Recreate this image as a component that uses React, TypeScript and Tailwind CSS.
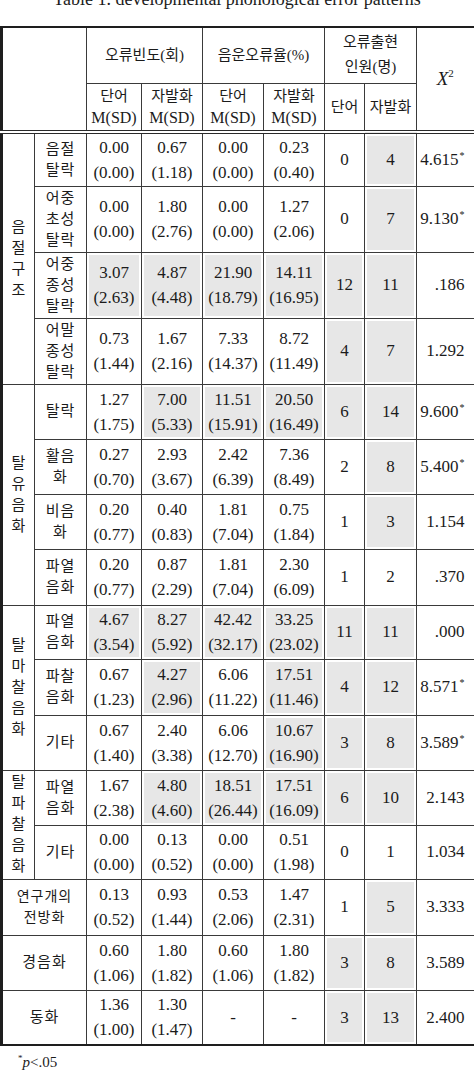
const font = "font-['Liberation_Serif','Noto_Sans_CJK_KR',serif]";

type Num = [string, string, boolean];
type Row = {
  label: string[];
  h: string;
  nums: Num[];
  w: [string, boolean];
  s: [string, boolean];
  x: string;
  star?: boolean;
};

const group1: Row[] = [
  { label: ['음절', '탈락'], h: 'h-[54px]', nums: [['0.00', '(0.00)', false], ['0.67', '(1.18)', false], ['0.00', '(0.00)', false], ['0.23', '(0.40)', false]], w: ['0', false], s: ['4', true], x: '4.615', star: true },
  { label: ['어중', '초성', '탈락'], h: 'h-[66px]', nums: [['0.00', '(0.00)', false], ['1.80', '(2.76)', false], ['0.00', '(0.00)', false], ['1.27', '(2.06)', false]], w: ['0', false], s: ['7', true], x: '9.130', star: true },
  { label: ['어중', '종성', '탈락'], h: 'h-[66px]', nums: [['3.07', '(2.63)', true], ['4.87', '(4.48)', true], ['21.90', '(18.79)', true], ['14.11', '(16.95)', true]], w: ['12', true], s: ['11', true], x: '.186' },
  { label: ['어말', '종성', '탈락'], h: 'h-[66px]', nums: [['0.73', '(1.44)', false], ['1.67', '(2.16)', false], ['7.33', '(14.37)', false], ['8.72', '(11.49)', false]], w: ['4', true], s: ['7', true], x: '1.292' },
];

const group2: Row[] = [
  { label: ['탈락'], h: 'h-[55px]', nums: [['1.27', '(1.75)', false], ['7.00', '(5.33)', true], ['11.51', '(15.91)', true], ['20.50', '(16.49)', true]], w: ['6', true], s: ['14', true], x: '9.600', star: true },
  { label: ['활음', '화'], h: 'h-[55px]', nums: [['0.27', '(0.70)', false], ['2.93', '(3.67)', false], ['2.42', '(6.39)', false], ['7.36', '(8.49)', false]], w: ['2', false], s: ['8', true], x: '5.400', star: true },
  { label: ['비음', '화'], h: 'h-[55px]', nums: [['0.20', '(0.77)', false], ['0.40', '(0.83)', false], ['1.81', '(7.04)', false], ['0.75', '(1.84)', false]], w: ['1', false], s: ['3', true], x: '1.154' },
  { label: ['파열', '음화'], h: 'h-[56px]', nums: [['0.20', '(0.77)', false], ['0.87', '(2.29)', false], ['1.81', '(7.04)', false], ['2.30', '(6.09)', false]], w: ['1', false], s: ['2', false], x: '.370' },
];

const group3: Row[] = [
  { label: ['파열', '음화'], h: 'h-[54px]', nums: [['4.67', '(3.54)', true], ['8.27', '(5.92)', true], ['42.42', '(32.17)', true], ['33.25', '(23.02)', true]], w: ['11', true], s: ['11', true], x: '.000' },
  { label: ['파찰', '음화'], h: 'h-[56px]', nums: [['0.67', '(1.23)', false], ['4.27', '(2.96)', true], ['6.06', '(11.22)', false], ['17.51', '(11.46)', true]], w: ['4', true], s: ['12', true], x: '8.571', star: true },
  { label: ['기타'], h: 'h-[55px]', nums: [['0.67', '(1.40)', false], ['2.40', '(3.38)', false], ['6.06', '(12.70)', false], ['10.67', '(16.90)', true]], w: ['3', true], s: ['8', true], x: '3.589', star: true },
];

const group4: Row[] = [
  { label: ['파열', '음화'], h: 'h-[55px]', nums: [['1.67', '(2.38)', false], ['4.80', '(4.60)', true], ['18.51', '(26.44)', true], ['17.51', '(16.09)', true]], w: ['6', true], s: ['10', true], x: '2.143' },
  { label: ['기타'], h: 'h-[54px]', nums: [['0.00', '(0.00)', false], ['0.13', '(0.52)', false], ['0.00', '(0.00)', false], ['0.51', '(1.98)', false]], w: ['0', false], s: ['1', false], x: '1.034' },
];

const tail: Row[] = [
  { label: ['연구개의', '전방화'], h: 'h-[56px]', nums: [['0.13', '(0.52)', false], ['0.93', '(1.44)', false], ['0.53', '(2.06)', false], ['1.47', '(2.31)', false]], w: ['1', false], s: ['5', true], x: '3.333' },
  { label: ['경음화'], h: 'h-[55px]', nums: [['0.60', '(1.06)', false], ['1.80', '(1.82)', false], ['0.60', '(1.06)', false], ['1.80', '(1.82)', false]], w: ['3', true], s: ['8', true], x: '3.589' },
  { label: ['동화'], h: 'h-[55px]', nums: [['1.36', '(1.00)', false], ['1.30', '(1.47)', false], ['-', '', false], ['-', '', false]], w: ['3', true], s: ['13', true], x: '2.400' },
];

const cell = 'border border-[#3a3a3a] p-0 text-center align-middle';
const shade = 'bg-[#e7e7e7] shadow-[inset_0_0_0_2px_#fff]';
const dbl = 'border-b-4 border-b-[#2a2a2a] border-double';

const Label = ({ lines, small }: { lines: string[]; small?: boolean }) => (
  <div className={`flex flex-col items-center ${small ? 'text-[14px]' : 'text-[15px]'} tracking-[1px] leading-[21px]`}>
    {lines.map((l) => (
      <span key={l}>{l}</span>
    ))}
  </div>
);

const Cells = ({ row }: { row: Row }) => (
  <>
    {row.nums.map(([m, sd, g], i) => (
      <td key={i} className={`${cell} ${g ? shade : ''} text-[17px] leading-[25px]`}>
        <div>{m}</div>
        {sd && <div>{sd}</div>}
      </td>
    ))}
    <td className={`${cell} ${row.w[1] ? shade : ''} text-[17px]`}>{row.w[0]}</td>
    <td className={`${cell} ${row.s[1] ? shade : ''} text-[17px]`}>{row.s[0]}</td>
    <td className={`${cell} text-[17px] !text-right pr-[9px]`}>
      {row.x}
      {row.star && <sup className="text-[10px] -top-[6px] ml-[1px]">*</sup>}
    </td>
  </>
);

const Group = ({ name, rows }: { name: string; rows: Row[] }) => (
  <>
    {rows.map((row, i) => (
      <tr key={i} className={row.h}>
        {i === 0 && (
          <td rowSpan={rows.length} className={cell}>
            <div className="flex flex-col items-center text-[15px] leading-[21px]">
              {name.split('').map((c, j) => (
                <span key={j}>{c}</span>
              ))}
            </div>
          </td>
        )}
        <td className={cell}>
          <Label lines={row.label} />
        </td>
        <Cells row={row} />
      </tr>
    ))}
  </>
);

export default function App() {
  return (
    <div className={`w-[474px] bg-white text-[#1b1b1b] ${font} overflow-hidden`}>
      <div className="-mt-[11px] mb-[17px] text-center text-[18px] leading-[20px]">
        Table 1. developmental phonological error patterns
      </div>

      <table className="w-[473px] table-fixed border-collapse border-y-2 border-l-[3px] border-r-2 border-[#1e1e1e]">
        <colgroup>
          <col className="w-[33px]" />
          <col className="w-[52px]" />
          <col className="w-[55px]" />
          <col className="w-[61px]" />
          <col className="w-[61px]" />
          <col className="w-[61px]" />
          <col className="w-[40px]" />
          <col className="w-[52px]" />
          <col className="w-[58px]" />
        </colgroup>
        <thead>
          <tr className="h-[56px]">
            <th rowSpan={2} colSpan={2} className={`${cell} font-normal ${dbl}`} />
            <th colSpan={2} className={`${cell} font-normal text-[15px]`}>
              오류빈도(회)
            </th>
            <th colSpan={2} className={`${cell} font-normal text-[15px]`}>
              음운오류율(%)
            </th>
            <th colSpan={2} className={`${cell} font-normal text-[15px] leading-[25px]`}>
              <div>오류출현</div>
              <div>인원(명)</div>
            </th>
            <th rowSpan={2} className={`${cell} font-normal text-[19px] ${dbl}`}>
              <span className="italic">X</span>
              <sup className="text-[11px] -top-[8px]">2</sup>
            </th>
          </tr>
          <tr className="h-[49px]">
            {['단어', '자발화', '단어', '자발화'].map((t, i) => (
              <th key={i} className={`${cell} font-normal text-[15px] leading-[22px] ${dbl}`}>
                <div>{t}</div>
                <div className="text-[16px]">M(SD)</div>
              </th>
            ))}
            <th className={`${cell} font-normal text-[15px] ${dbl}`}>단어</th>
            <th className={`${cell} font-normal text-[15px] ${dbl}`}>자발화</th>
          </tr>
        </thead>
        <tbody>
          <Group name="음절구조" rows={group1} />
          <Group name="탈유음화" rows={group2} />
          <Group name="탈마찰음화" rows={group3} />
          <Group name="탈파찰음화" rows={group4} />
          {tail.map((row, i) => (
            <tr key={i} className={row.h}>
              <td colSpan={2} className={cell}>
                <Label lines={row.label} small={row.label[0].length > 3} />
              </td>
              <Cells row={row} />
            </tr>
          ))}
        </tbody>
      </table>

      <div className="mt-[6px] pl-[18px] text-[15px] leading-[20px] pb-[10px]">
        <sup className="text-[9px] -top-[6px]">*</sup>
        <span className="italic">p</span>&lt;.05
      </div>
    </div>
  );
}
